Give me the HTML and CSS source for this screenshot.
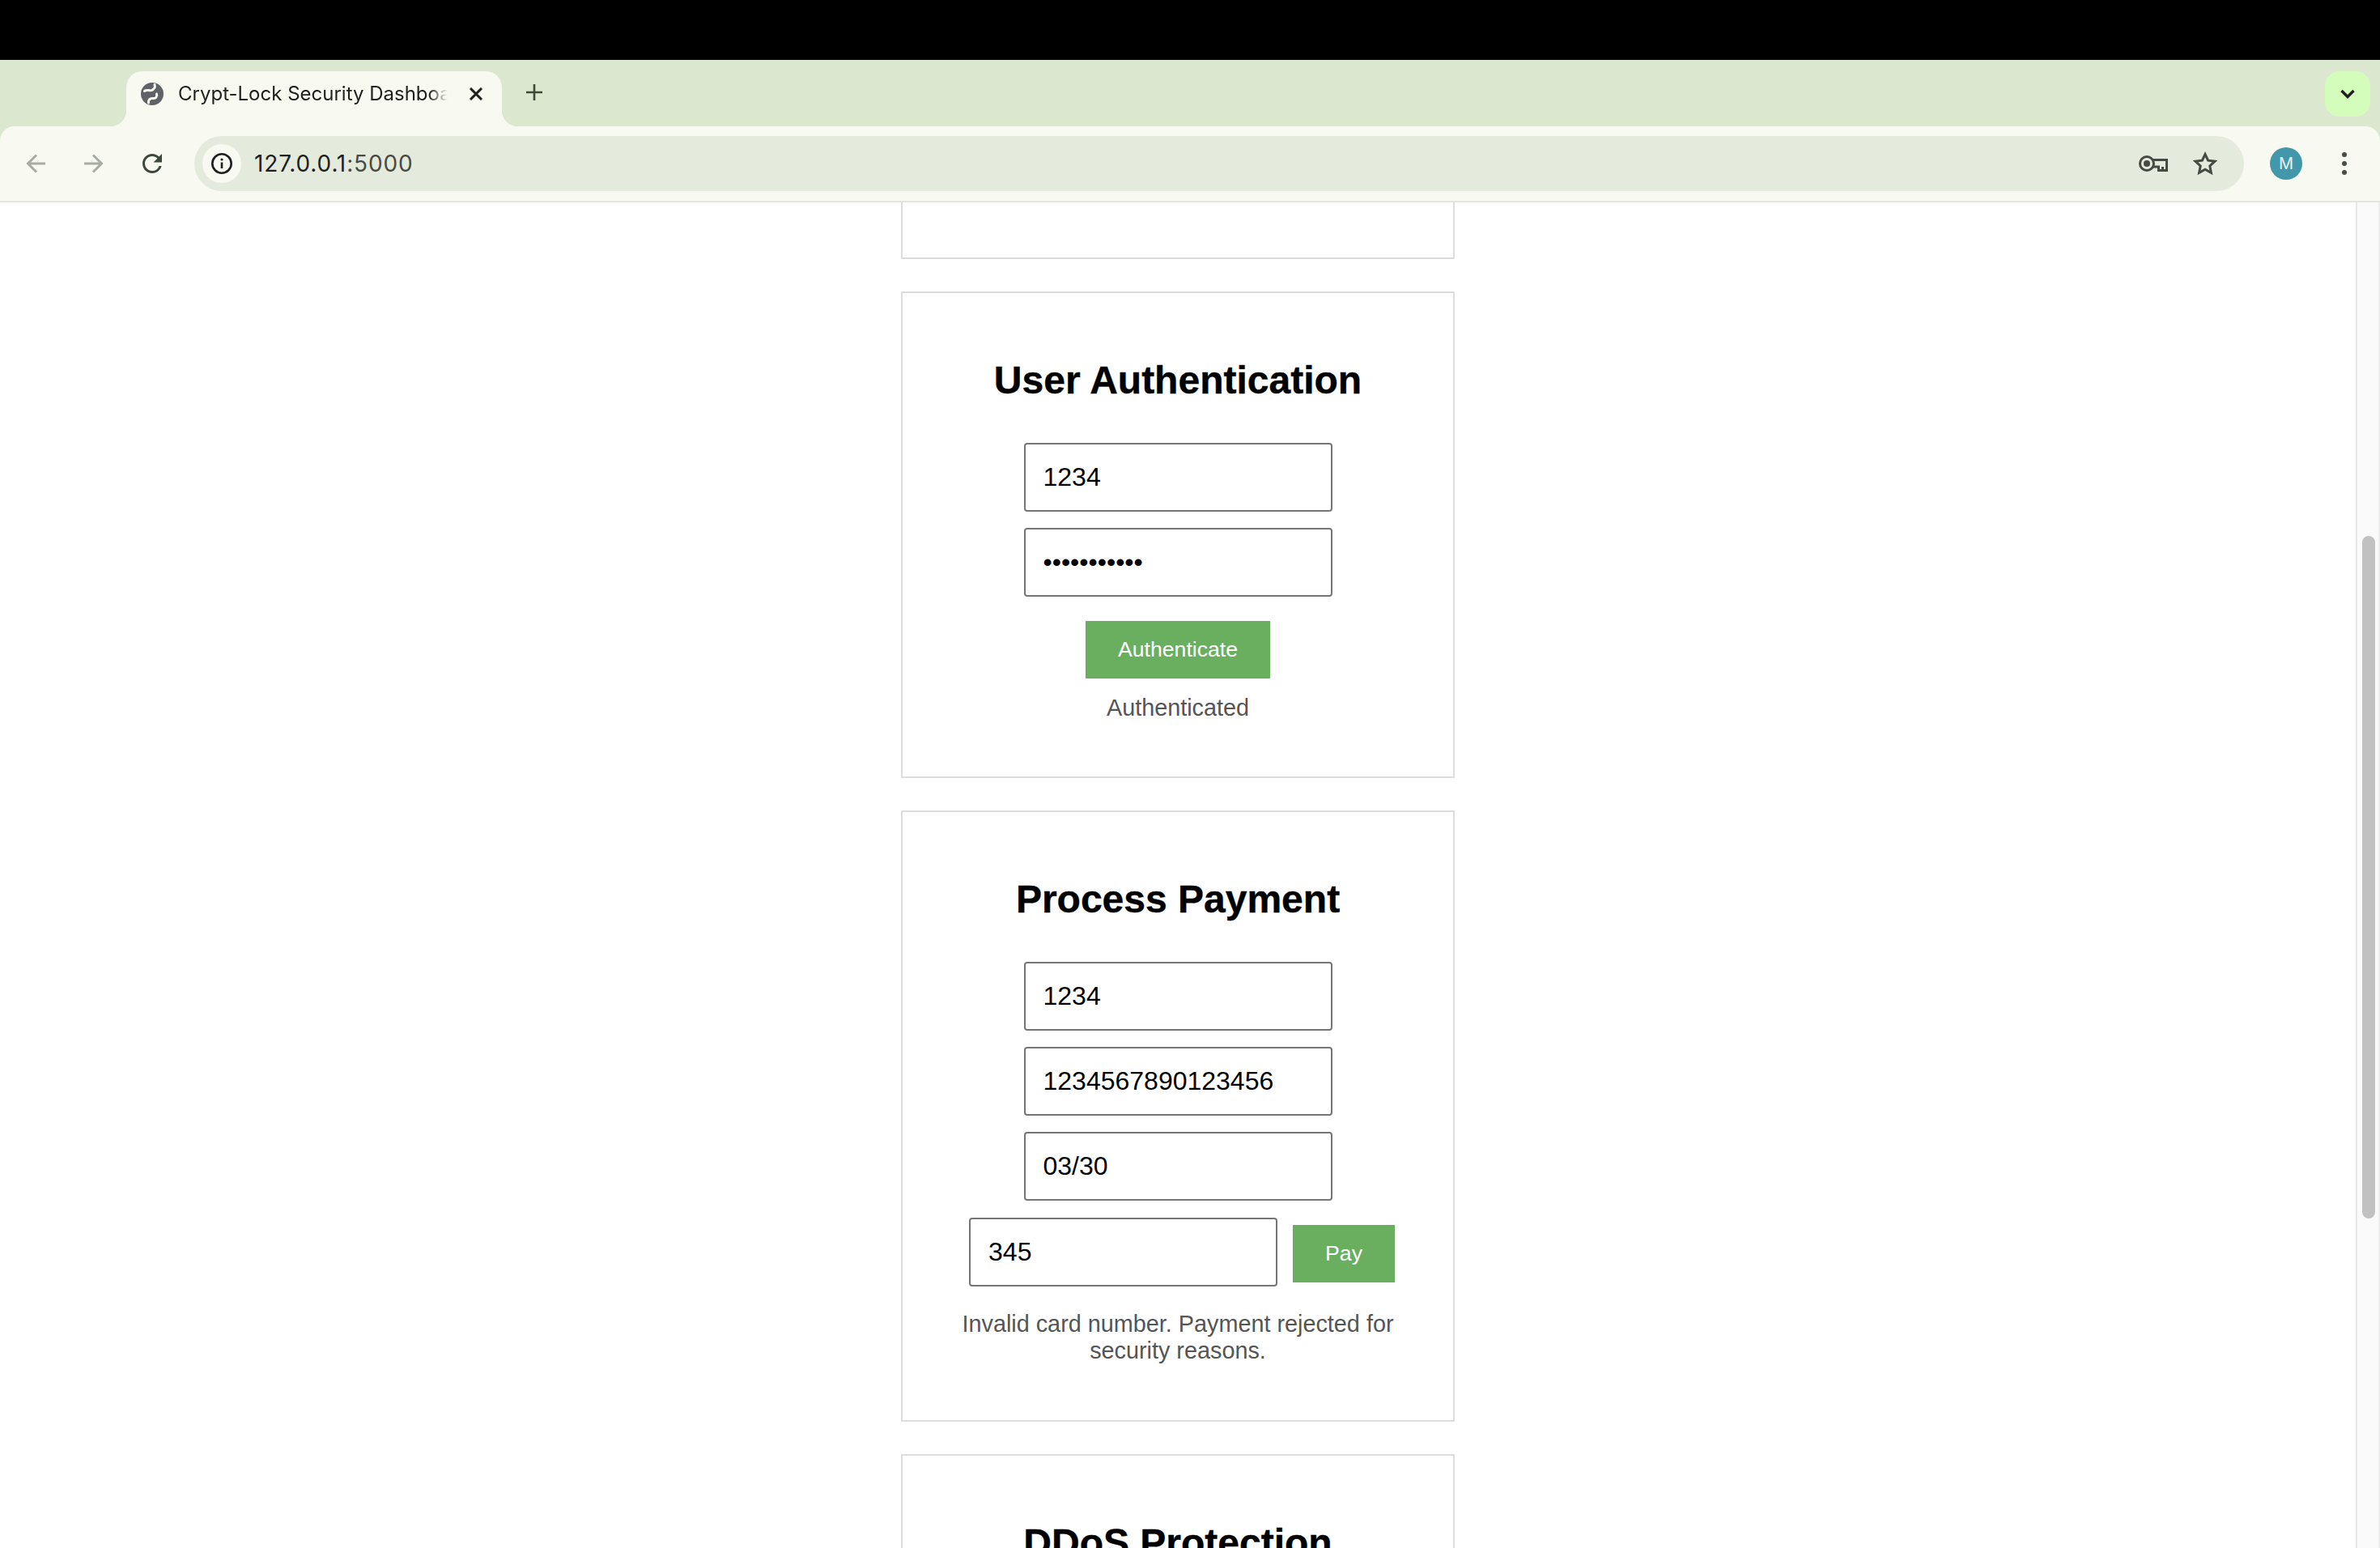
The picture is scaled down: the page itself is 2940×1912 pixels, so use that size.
FILE: index.html
```html
<!DOCTYPE html>
<html lang="en">
<head>
<meta charset="utf-8">
<title>Crypt-Lock Security Dashboard</title>
<link rel="stylesheet" href="styles.css">
</head>
<body>
<div class="os-bar"></div>
<header class="chrome">
  <div class="tab-strip">
    <div class="tab">
      <svg class="favicon" viewBox="0 0 28 28" aria-hidden="true">
        <circle cx="14" cy="14" r="14" fill="#5f6368"/>
        <path d="M4.5 10.5C8 7.5 11 11.5 14.5 9S17.5 5 17 2.5" fill="none" stroke="#f8f9f1" stroke-width="3" stroke-linecap="round"/>
        <path d="M9.5 25C9 21 11.5 19 15 19.5S20.5 17 19.5 14" fill="none" stroke="#f8f9f1" stroke-width="3" stroke-linecap="round"/>
      </svg>
      <span class="tab-title">Crypt-Lock Security Dashboard</span>
      <svg class="tab-close" viewBox="0 0 18 16" aria-hidden="true">
        <path d="M2 1L16 15M16 1L2 15" fill="none" stroke="#1f1f1f" stroke-width="3"/>
      </svg>
    </div>
    <svg class="new-tab" viewBox="0 0 20 20" aria-hidden="true">
      <path d="M10 0V20M0 10H20" fill="none" stroke="#3d4a38" stroke-width="2.6"/>
    </svg>
    <div class="tab-search">
      <svg class="chevron" viewBox="0 0 18 12" aria-hidden="true">
        <path d="M1.5 2L9 9.5L16.5 2" fill="none" stroke="#1f1f1f" stroke-width="3.4"/>
      </svg>
    </div>
  </div>
  <div class="toolbar">
    <div class="tool">
      <svg class="arrow" viewBox="0 0 24 24" aria-hidden="true">
        <path d="M24 12H3M13 1.5L2.5 12L13 22.5" fill="none" stroke="#a9aca3" stroke-width="3"/>
      </svg>
    </div>
    <div class="tool">
      <svg class="arrow" viewBox="0 0 24 24" aria-hidden="true">
        <path d="M0 12H21M11 1.5L21.5 12L11 22.5" fill="none" stroke="#a9aca3" stroke-width="3"/>
      </svg>
    </div>
    <div class="tool">
      <svg class="reload" viewBox="0 0 24 24" aria-hidden="true">
        <path fill="#3d4a38" d="M17.65 6.35A7.958 7.958 0 0 0 12 4c-4.42 0-7.99 3.58-7.99 8s3.57 8 7.99 8c3.73 0 6.84-2.55 7.73-6h-2.08A5.99 5.99 0 0 1 12 18c-3.31 0-6-2.69-6-6s2.69-6 6-6c1.66 0 3.14.69 4.22 1.78L13 11h7V4l-2.35 2.35z"/>
      </svg>
    </div>
    <div class="omnibox">
      <div class="site-chip">
        <svg class="info" viewBox="0 0 26 26" aria-hidden="true">
          <circle cx="13" cy="13" r="11.7" fill="none" stroke="#1f1f1f" stroke-width="2.6"/>
          <circle cx="13" cy="8" r="1.6" fill="#1f1f1f"/>
          <path d="M13 11.5V19" fill="none" stroke="#1f1f1f" stroke-width="2.6"/>
        </svg>
      </div>
      <span class="url">127.0.0.1<span class="url-port">:5000</span></span>
      <svg class="key" viewBox="0 0 36 20" aria-hidden="true">
        <circle cx="10" cy="10" r="8.5" fill="none" stroke="#474a42" stroke-width="3"/>
        <circle cx="10" cy="10" r="4" fill="#474a42"/>
        <path d="M18 5.5H34.5V18.5H24.5V14H18M29.5 14V18" fill="none" stroke="#474a42" stroke-width="3"/>
      </svg>
      <svg class="star" viewBox="0 0 30 30" aria-hidden="true">
        <path d="M15 3.5L18.6 11.2L27 12.2L20.8 18L22.4 26.3L15 22.2L7.6 26.3L9.2 18L3 12.2L11.4 11.2Z" fill="none" stroke="#474a42" stroke-width="3"/>
      </svg>
    </div>
    <div class="avatar">M</div>
    <div class="tool tool-menu">
      <span class="menu-dot"></span>
      <span class="menu-dot"></span>
      <span class="menu-dot"></span>
    </div>
  </div>
</header>
<div class="viewport">
  <main class="page">
    <section class="card card-cut"></section>
    <section class="card">
      <h2 class="card-title">User Authentication</h2>
      <input class="field" type="text" value="1234">
      <input class="field" type="password" value="12345678901">
      <button class="action action-block" type="button">Authenticate</button>
      <p class="status">Authenticated</p>
    </section>
    <section class="card card-payment">
      <h2 class="card-title">Process Payment</h2>
      <input class="field" type="text" value="1234">
      <input class="field" type="text" value="1234567890123456">
      <input class="field" type="text" value="03/30">
      <div class="pay-row">
        <input class="field field-cvv" type="text" value="345">
        <button class="action action-pay" type="button">Pay</button>
      </div>
      <p class="status status-payment">Invalid card number. Payment rejected for security reasons.</p>
    </section>
    <section class="card">
      <h2 class="card-title">DDoS Protection</h2>
    </section>
  </main>
  <div class="scrollbar"><div class="scroll-thumb"></div></div>
</div>
</body>
</html>
```

FILE: styles.css
```css
* { box-sizing: border-box; }

html, body {
  margin: 0;
  height: 1912px;
  overflow: hidden;
  background: #fff;
}

body {
  display: flex;
  flex-direction: column;
  font-family: "Liberation Sans", Arial, sans-serif;
}

.os-bar {
  height: 74px;
  flex: none;
  background: #000;
}

.chrome {
  flex: none;
  background: #dbe7cf;
}

.tab-strip {
  height: 82px;
  padding: 14px 12px 0 156px;
  display: flex;
  align-items: flex-start;
}

.tab {
  position: relative;
  width: 464px;
  height: 68px;
  padding: 0 24px 12px 18px;
  display: flex;
  align-items: center;
  background: #f8f9f1;
  border-radius: 20px 20px 0 0;
}

.tab::before,
.tab::after {
  content: "";
  position: absolute;
  bottom: 0;
  width: 20px;
  height: 20px;
}

.tab::before {
  left: -20px;
  background: radial-gradient(circle at 0 0, transparent 20px, #f8f9f1 20.5px);
}

.tab::after {
  right: -20px;
  background: radial-gradient(circle at 100% 0, transparent 20px, #f8f9f1 20.5px);
}

.favicon {
  width: 28px;
  height: 28px;
  flex: none;
}

.tab-title {
  width: 333px;
  margin: 0 0 2px 18px;
  flex: none;
  overflow: hidden;
  white-space: nowrap;
  font-family: Inter, "Noto Sans", sans-serif;
  font-size: 24px;
  color: #1f1f1f;
  -webkit-mask-image: linear-gradient(to right, #000 93%, transparent 100%);
  mask-image: linear-gradient(to right, #000 93%, transparent 100%);
}

.tab-close {
  width: 18px;
  height: 16px;
  margin-left: 26px;
  flex: none;
}

.new-tab {
  width: 20px;
  height: 20px;
  margin: 16px 0 0 30px;
  flex: none;
}

.tab-search {
  width: 56px;
  height: 56px;
  margin-left: auto;
  flex: none;
  display: flex;
  align-items: center;
  justify-content: center;
  background: #d4fdbc;
  border-radius: 18px;
}

.chevron {
  width: 18px;
  height: 12px;
}

.toolbar {
  height: 94px;
  padding: 12px 8px 12px 8px;
  display: flex;
  align-items: center;
  background: #f8f9f1;
  border-bottom: 2px solid #e3e6d8;
  border-radius: 18px 18px 0 0;
}

.tool {
  width: 72px;
  height: 68px;
  flex: none;
  display: flex;
  align-items: center;
  justify-content: center;
}

.arrow {
  width: 24px;
  height: 24px;
}

.reload {
  width: 36px;
  height: 36px;
}

.omnibox {
  flex: 1;
  height: 68px;
  margin-left: 16px;
  padding: 0 33px 0 10px;
  display: flex;
  align-items: center;
  background: #e5ebdc;
  border-radius: 34px;
}

.site-chip {
  width: 48px;
  height: 48px;
  flex: none;
  display: flex;
  align-items: center;
  justify-content: center;
  background: #f8f9f1;
  border-radius: 24px;
}

.info {
  width: 26px;
  height: 26px;
}

.url {
  margin-left: 16px;
  font-family: Inter, "Noto Sans", sans-serif;
  font-size: 28px;
  letter-spacing: 0.85px;
  color: #1f1f1f;
}

.url-port {
  color: #4a4a45;
}

.key {
  width: 36px;
  height: 20px;
  margin-left: auto;
  flex: none;
}

.star {
  width: 30px;
  height: 30px;
  margin-left: 31px;
  flex: none;
}

.avatar {
  width: 40px;
  height: 40px;
  margin: 0 16px 0 32px;
  flex: none;
  display: flex;
  align-items: center;
  justify-content: center;
  background: #4397ab;
  border-radius: 50%;
  font-family: Inter, "Noto Sans", sans-serif;
  font-size: 20px;
  color: #e4f5f8;
}

.tool-menu {
  flex-direction: column;
  gap: 5px;
}

.menu-dot {
  width: 6px;
  height: 6px;
  background: #474f43;
  border-radius: 50%;
}

.viewport {
  flex: 1;
  min-height: 0;
  display: flex;
  overflow: hidden;
}

.page {
  flex: 1;
  min-width: 0;
  display: flex;
  flex-direction: column;
  align-items: center;
  gap: 40px;
}

.card {
  width: 684px;
  flex: none;
  padding: 80px 40px 68px;
  display: flex;
  flex-direction: column;
  align-items: center;
  border: 2px solid #ddd;
  background: #fff;
}

.card-cut {
  height: 70px;
  padding: 0;
  border-top: 0;
}

.card-title {
  margin: 0 0 50px;
  font-size: 48px;
  font-weight: 700;
  line-height: 55px;
  color: #000;
  text-align: center;
  -webkit-text-stroke: 0.4px #000;
}

.field {
  width: 381px;
  height: 85px;
  margin: 0 0 20px;
  padding: 0 20px 0 22px;
  flex: none;
  border: 2px solid #767676;
  border-radius: 4px;
  background: #fff;
  font-family: "Liberation Sans", Arial, sans-serif;
  font-size: 32px;
  color: #000;
  outline: none;
}

.action {
  height: 71px;
  padding: 0 40px;
  flex: none;
  border: 0;
  background: #6aae5f;
  font-family: "Liberation Sans", Arial, sans-serif;
  font-size: 26.67px;
  color: #fff;
}

.action-block {
  margin-top: 10px;
}

.pay-row {
  margin-top: 1px;
  padding-left: 10px;
  display: flex;
  align-items: flex-start;
  justify-content: center;
  gap: 19px;
}

.field-cvv {
  margin: 0;
}

.action-pay {
  margin-top: 9px;
}

.status {
  margin: 20px 0 0;
  font-size: 28.8px;
  color: #555;
  text-align: center;
}

.status-payment {
  margin: 30px 0 1px;
}

.scrollbar {
  width: 30px;
  flex: none;
  padding: 412px 4px 0 6px;
  background: #fafafa;
  border-left: 2px solid #e8e8e8;
  border-right: 2px solid #efefef;
}

.scroll-thumb {
  width: 16px;
  height: 843px;
  background: #c1c1c1;
  border-radius: 8px;
}
```
